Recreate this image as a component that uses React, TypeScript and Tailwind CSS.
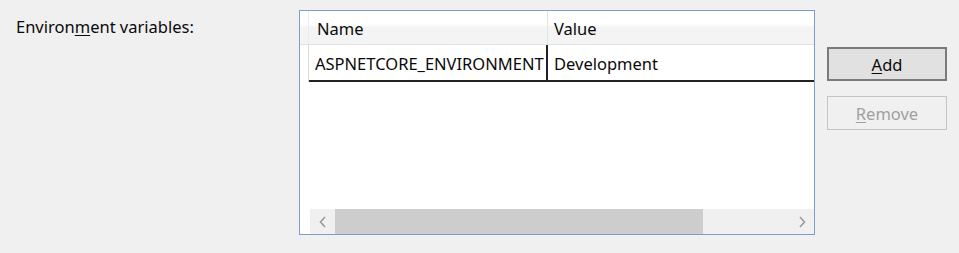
export default function App() {
  return (
    <div className="w-[959px] h-[253px] bg-[#f0f0f0] flex text-[16.5px] text-[#0a0a0a] font-['Noto_Sans',sans-serif] leading-none">
      <div className="w-[299px] pl-[16px] pt-[19px] shrink-0">
        <span>
          Environ<span className="underline underline-offset-2">m</span>ent variables:
        </span>
      </div>

      <div className="mt-[10px] w-[516px] h-[225px] border border-[#7f9ccb] bg-white flex flex-col shrink-0">
        <div className="h-[34px] flex bg-gradient-to-b from-white from-40% to-[#f4f4f4] to-50% border-b border-[#e3e3e3]">
          <div className="w-[9px] border-r border-[#ececec]" />
          <div className="w-[239px] border-r border-[#e3e3e3] pl-[8px] pt-[3px] flex items-center">Name</div>
          <div className="flex-1 pl-[6px] pt-[3px] flex items-center">Value</div>
        </div>
        <div className="h-[37px] flex">
          <div className="w-[9px] border-r border-[#d9d9d9]" />
          <div className="flex-1 flex border-b-2 border-[#222]">
            <div className="w-[239px] border-r-2 border-[#222] pl-[6px] pt-[3px] flex items-center">ASPNETCORE_ENVIRONMENT</div>
            <div className="flex-1 pl-[6px] pt-[3px] flex items-center">Development</div>
          </div>
        </div>
        <div className="flex-1" />
        <div className="h-[25px] ml-[10px] flex bg-[#f0f0f0]">
          <div className="w-[25px] flex items-center justify-center">
            <svg width="8" height="12" viewBox="0 0 8 12">
              <path d="M6 1 L1.5 6 L6 11" fill="none" stroke="#9a9a9a" strokeWidth="1.6" />
            </svg>
          </div>
          <div className="w-[368px] bg-[#cdcdcd]" />
          <div className="flex-1 flex items-center justify-end pr-[8px]">
            <svg width="8" height="12" viewBox="0 0 8 12">
              <path d="M2 1 L6.5 6 L2 11" fill="none" stroke="#9a9a9a" strokeWidth="1.6" />
            </svg>
          </div>
        </div>
      </div>

      <div className="ml-[12px] mt-[47px] flex flex-col gap-[15px]">
        <button className="w-[120px] h-[34px] bg-[#e1e1e1] border-2 border-[#7a7a7a] pt-[2px] flex items-center justify-center">
          <span>
            <span className="underline underline-offset-2">A</span>dd
          </span>
        </button>
        <button className="w-[120px] h-[34px] bg-[#f0f0f0] border border-[#c4c4c4] text-[#a0a0a0] pt-[2px] flex items-center justify-center">
          <span>
            <span className="underline underline-offset-2">R</span>emove
          </span>
        </button>
      </div>
    </div>
  );
}
